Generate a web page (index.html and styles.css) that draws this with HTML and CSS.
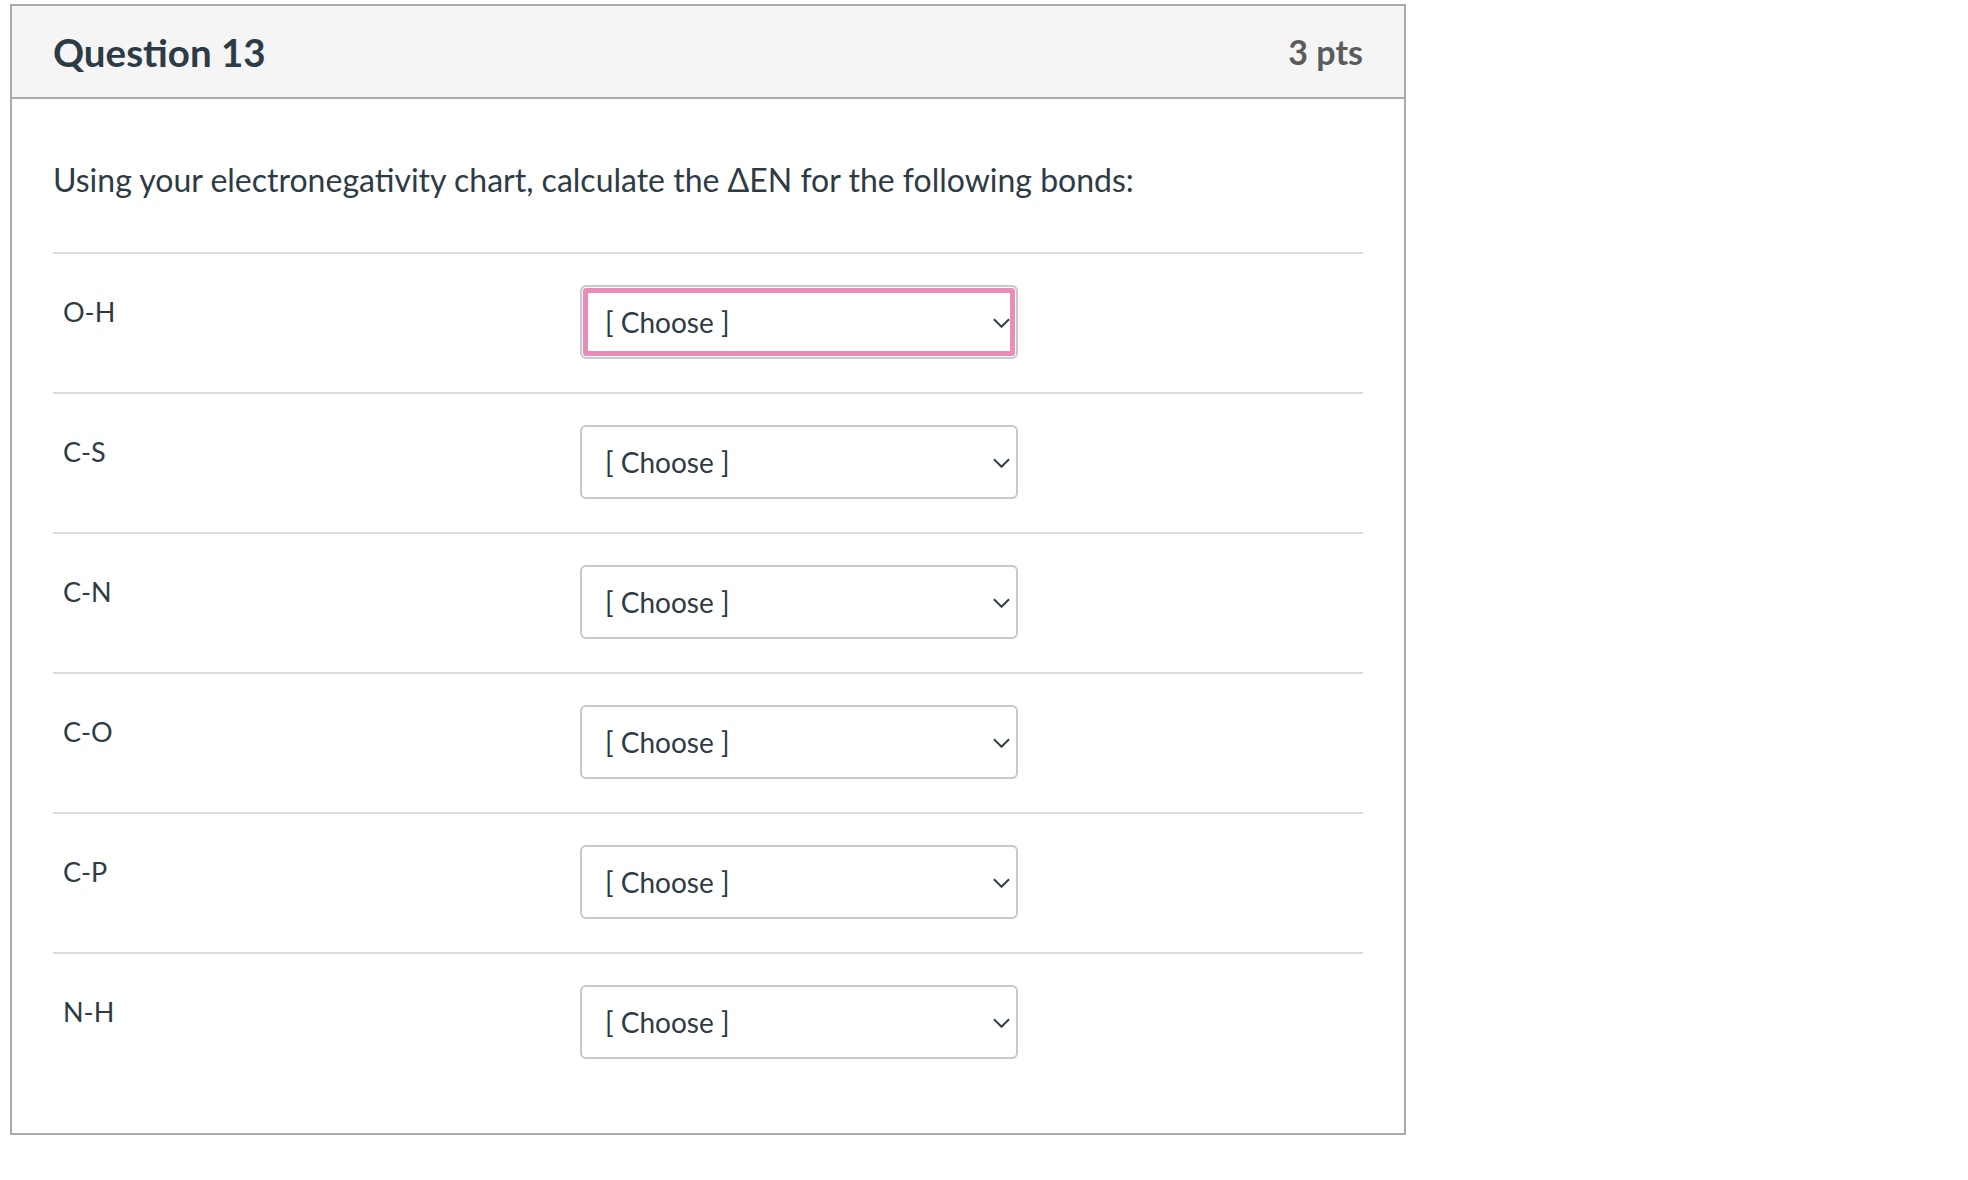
FILE: index.html
```html
<!DOCTYPE html>
<html lang="en">
<head>
    <meta charset="UTF-8">
    <meta name="viewport" content="width=device-width, initial-scale=1.0">
    <title>Question 13</title>
    <link rel="stylesheet" href="styles.css">
</head>
<body>
    <div class="question">
        <div class="question-header">
            <h2 class="question-title">Question 13</h2>
            <span class="question-points">3 pts</span>
        </div>
        <div class="question-body">
            <p class="question-text">Using your electronegativity chart, calculate the ΔEN for the following bonds:</p>

            <div class="answer-row">
                <div class="answer-label">O-H</div>
                <div class="select-wrap">
                    <select class="answer-select focused"><option>[ Choose ]</option></select>
                    <svg class="chevron" viewBox="0 0 18 10"><path d="M1 1l8 8 8-8"/></svg>
                </div>
            </div>
            <div class="answer-row">
                <div class="answer-label">C-S</div>
                <div class="select-wrap">
                    <select class="answer-select"><option>[ Choose ]</option></select>
                    <svg class="chevron" viewBox="0 0 18 10"><path d="M1 1l8 8 8-8"/></svg>
                </div>
            </div>
            <div class="answer-row">
                <div class="answer-label">C-N</div>
                <div class="select-wrap">
                    <select class="answer-select"><option>[ Choose ]</option></select>
                    <svg class="chevron" viewBox="0 0 18 10"><path d="M1 1l8 8 8-8"/></svg>
                </div>
            </div>
            <div class="answer-row">
                <div class="answer-label">C-O</div>
                <div class="select-wrap">
                    <select class="answer-select"><option>[ Choose ]</option></select>
                    <svg class="chevron" viewBox="0 0 18 10"><path d="M1 1l8 8 8-8"/></svg>
                </div>
            </div>
            <div class="answer-row">
                <div class="answer-label">C-P</div>
                <div class="select-wrap">
                    <select class="answer-select"><option>[ Choose ]</option></select>
                    <svg class="chevron" viewBox="0 0 18 10"><path d="M1 1l8 8 8-8"/></svg>
                </div>
            </div>
            <div class="answer-row">
                <div class="answer-label">N-H</div>
                <div class="select-wrap">
                    <select class="answer-select"><option>[ Choose ]</option></select>
                    <svg class="chevron" viewBox="0 0 18 10"><path d="M1 1l8 8 8-8"/></svg>
                </div>
            </div>
        </div>
    </div>
</body>
</html>
```

FILE: styles.css
```css
body {
    margin: 0;
    padding: 4px 0 0 10px;
    font-family: Lato, "Open Sans", sans-serif;
    color: #2d3b45;
    background: #fff;
}

.question {
    width: 1396px;
    box-sizing: border-box;
    border: 2px solid #aaaaaa;
}

.question-header {
    height: 91px;
    background: #f5f5f5;
    border-bottom: 2px solid #aaaaaa;
    padding: 0 41px;
    display: flex;
    align-items: center;
    justify-content: space-between;
}

.question-title {
    margin: 0;
    font-size: 38.5px;
    font-weight: 700;
    color: #2d3b45;
}

.question-points {
    font-size: 34px;
    font-weight: 700;
    color: #5b5b5b;
}

.question-body {
    padding: 58px 41px 41px;
}

.question-text {
    margin: 0 0 49px;
    font-size: 32px;
    line-height: 46px;
}

.answer-row {
    border-top: 2px solid #dddddd;
    padding: 31px 0 33px;
    display: flex;
    align-items: flex-start;
}

.answer-label {
    width: 517px;
    padding: 8px 0 0 10px;
    font-size: 27px;
    line-height: 37px;
}

.select-wrap {
    position: relative;
    width: 438px;
}

.answer-select {
    appearance: none;
    -webkit-appearance: none;
    display: block;
    width: 100%;
    height: 74px;
    margin: 0;
    padding: 0 40px 0 23px;
    border: 2px solid #c9c9c9;
    border-radius: 6px;
    background: #fff;
    font-family: Lato, "Open Sans", sans-serif;
    font-size: 28px;
    color: #2d3b45;
    outline: none;
}

.answer-select.focused {
    box-shadow: inset 0 0 0 1px #fff, inset 0 0 0 6px #e98cb6;
}

.chevron {
    position: absolute;
    right: 8px;
    top: 33px;
    width: 17px;
    height: 10px;
    fill: none;
    stroke: #2d3b45;
    stroke-width: 2;
    pointer-events: none;
}
```
